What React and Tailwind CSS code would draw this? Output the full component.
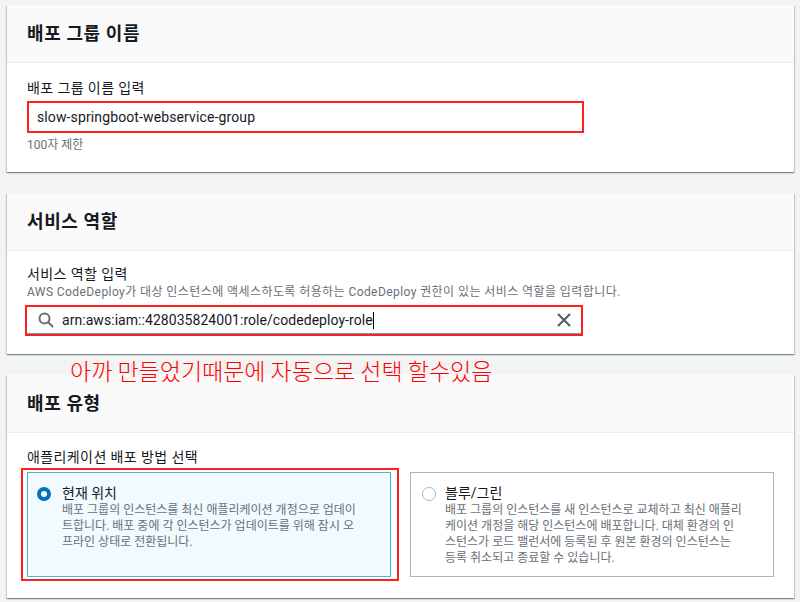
import React from "react";

const font = { fontFamily: 'Roboto, "Noto Sans CJK KR", sans-serif' };

function Card({ title, children, className = "" }) {
  return (
    <div className={"bg-white shadow-[0_1px_1px_0_rgba(0,28,36,0.3),1px_1px_1px_0_rgba(0,28,36,0.15),-1px_1px_1px_0_rgba(0,28,36,0.15)] " + className}>
      <div className="h-[58px] bg-[#fafafa] border-b border-[#eaeded] px-5 flex items-center">
        <h2 className="text-[18px] font-bold text-[#16191f] leading-[22px] tracking-[0.6px]">{title}</h2>
      </div>
      {children}
    </div>
  );
}

function Radio({ checked }) {
  return checked ? (
    <span className="block w-[14px] h-[14px] rounded-full border-[4px] border-[#0073bb] bg-white" />
  ) : (
    <span className="block w-[14px] h-[14px] rounded-full border border-[#aab7b8] bg-white" />
  );
}

export default function App() {
  return (
    <div className="relative min-h-[602px] bg-[#f2f3f3] pl-[7px] pr-[6px] pt-[5px]" style={font}>
      <Card title="배포 그룹 이름">
        <div className="px-5 pt-[15px] pb-[19px]">
          <div className="text-[14px] leading-[20px] text-[#16191f] tracking-[0.4px]">배포 그룹 이름 입력</div>
          <div className="mt-[3px] w-[557px] h-[32px] border-2 border-[#ff2020] flex items-center pl-[8px]">
            <span className="text-[14px] text-[#16191f] tracking-[0.12px]">slow-springboot-webservice-group</span>
          </div>
          <div className="mt-[4px] text-[12px] leading-[16px] text-[#687078]">100자 제한</div>
        </div>
      </Card>

      <Card title="서비스 역할" className="mt-[21px]">
        <div className="px-5 pt-[13px] pb-[18px]">
          <div className="text-[14px] leading-[20px] text-[#16191f] tracking-[0.4px]">서비스 역할 입력</div>
          <div className="text-[12px] leading-[16px] text-[#687078] tracking-[0.42px] whitespace-nowrap">
            AWS CodeDeploy가 대상 인스턴스에 액세스하도록 허용하는 CodeDeploy 권한이 있는 서비스 역할을 입력합니다.
          </div>
          <div className="mt-[5px] ml-[-2px] w-[558px] h-[31px] border-2 border-[#ff2020] flex items-center">
            <div className="flex-1 h-full border-b border-[#5fa5c0] flex items-center pl-[11px] pr-[10px]">
              <svg width="16" height="16" viewBox="0 0 16 16" fill="none" stroke="#687078" strokeWidth="2">
                <circle cx="6.5" cy="6.5" r="5" />
                <path d="M10.2 10.2L14.5 14.5" strokeLinecap="round" />
              </svg>
              <span className="ml-[8px] text-[14px] text-[#16191f] tracking-[0.05px]">arn:aws:iam::428035824001:role/codedeploy-role</span>
              <span className="inline-block w-px h-[17px] bg-black" />
              <span className="flex-1" />
              <svg width="14" height="14" viewBox="0 0 14 14" fill="none" stroke="#545b64" strokeWidth="2">
                <path d="M1 1L13 13M13 1L1 13" />
              </svg>
            </div>
          </div>
        </div>
      </Card>

      <Card title="배포 유형" className="mt-[21px]">
        <div className="px-5 pt-[14px] pb-[21px]">
          <div className="text-[14px] leading-[20px] text-[#16191f] tracking-[0.4px]">애플리케이션 배포 방법 선택</div>
          <div className="mt-[5px] grid grid-cols-2 gap-[19px]">
            <div className="relative h-[105px] bg-[#f1faff] border border-[#44b9d6] pl-[9px] pt-[11px]">
              <div className="absolute left-[-7px] top-[-5px] right-[-9px] bottom-[-5px] border-2 border-[#ff2020]" />
              <div className="flex gap-[11px]">
                <div className="pt-[3px]"><Radio checked /></div>
                <div>
                  <div className="text-[14px] leading-[18px] text-[#16191f]">현재 위치</div>
                  <div className="text-[12px] leading-[16px] text-[#687078] whitespace-nowrap">
                    <div>배포 그룹의 인스턴스를 최신 애플리케이션 개정으로 업데이</div>
                    <div>트합니다. 배포 중에 각 인스턴스가 업데이트를 위해 잠시 오</div>
                    <div>프라인 상태로 전환됩니다.</div>
                  </div>
                </div>
              </div>
            </div>
            <div className="h-[105px] bg-white border border-[#aab7b8] pl-[11px] pt-[11px]">
              <div className="flex gap-[9px]">
                <div className="pt-[3px]"><Radio /></div>
                <div>
                  <div className="text-[14px] leading-[18px] text-[#16191f]">블루/그린</div>
                  <div className="text-[12px] leading-[16px] text-[#687078] whitespace-nowrap">
                    <div>배포 그룹의 인스턴스를 새 인스턴스로 교체하고 최신 애플리</div>
                    <div>케이션 개정을 해당 인스턴스에 배포합니다. 대체 환경의 인</div>
                    <div>스턴스가 로드 밸런서에 등록된 후 원본 환경의 인스턴스는</div>
                    <div>등록 취소되고 종료할 수 있습니다.</div>
                  </div>
                </div>
              </div>
            </div>
          </div>
        </div>
      </Card>

      <div
        className="absolute left-[70px] top-[355px] text-[23px] leading-[30px] text-[#ff0000] whitespace-nowrap font-light"
        style={{ fontFamily: '"Noto Sans CJK KR", sans-serif' }}
      >
        아까 만들었기때문에 자동으로 선택 할수있음
      </div>
    </div>
  );
}
